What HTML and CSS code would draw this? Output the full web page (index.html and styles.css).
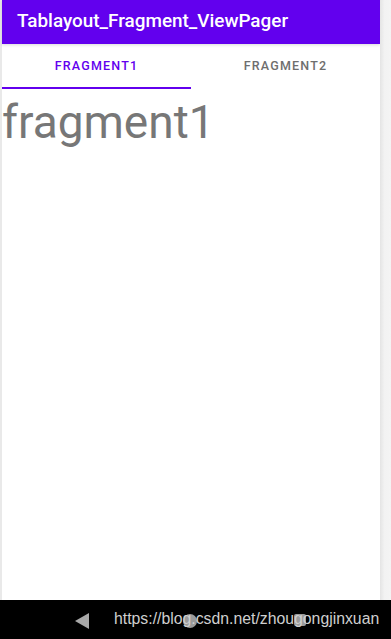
FILE: index.html
```html
<!DOCTYPE html>
<html lang="en">
  <head>
    <meta charset="UTF-8" />
    <title>Tablayout_Fragment_ViewPager</title>
    <link rel="stylesheet" href="styles.css">
  </head>
  <body>
    <div class="screen">
      <div class="app">
        <div class="toolbar">Tablayout_Fragment_ViewPager</div>

        <div class="tabs">
          <div class="tab active">FRAGMENT1</div>
          <div class="tab">FRAGMENT2</div>
        </div>

        <div class="page">
          <p class="big">fragment1</p>
        </div>
      </div>
      <div class="side"></div>
    </div>

    <div class="navbar">
      <svg class="back" width="14" height="16" viewBox="0 0 14 16">
        <polygon points="0,8 14,0 14,16" fill="#a8a8a8" />
      </svg>
      <span class="dot circle"></span>
      <span class="dot square"></span>
      <span class="mark">https://blog.csdn.net/zhougongjinxuan</span>
    </div>
  </body>
</html>
```

FILE: styles.css
```css
body {
  margin: 0;
  padding: 0;
  width: 391px;
  height: 639px;
  overflow: hidden;
  font-family: Roboto, "Noto Sans", sans-serif;
  background-color: #e9e9e9;
  display: flex;
  flex-direction: column;
}

.screen {
  flex: 1;
  display: flex;
  padding-left: 2px;
}

.app {
  width: 378px;
  background-color: #fff;
  display: flex;
  flex-direction: column;
}

.side {
  flex: 1;
  background: linear-gradient(to right, #e4e4e4, #f2f2f2 40%, #f4f4f4);
}

.toolbar {
  height: 44px;
  background-color: #6200ee;
  color: #fff;
  font-size: 18.9px;
  font-weight: 500;
  line-height: 42px;
  padding-left: 15px;
  box-shadow: 0 1px 3px rgba(0, 0, 0, 0.15);
}

.tabs {
  display: flex;
  height: 45px;
}

.tab {
  flex: 1;
  text-align: center;
  font-size: 12.5px;
  font-weight: 500;
  letter-spacing: 1.2px;
  line-height: 44px;
  color: #6e6e6e;
  border-bottom: 2px solid transparent;
}

.tab.active {
  color: #6200ee;
  border-bottom-color: #6200ee;
}

.page {
  flex: 1;
  padding-top: 5px;
}

.big {
  margin: 0;
  font-size: 46px;
  line-height: 56px;
  color: #777;
}

/* Navigation bar */
.navbar {
  height: 39px;
  background-color: #000;
  position: relative;
}

.back {
  position: absolute;
  left: 75px;
  top: 13px;
}

.dot {
  position: absolute;
  background-color: #9a9a9a;
}

.circle {
  left: 183px;
  top: 14px;
  width: 14px;
  height: 14px;
  border-radius: 50%;
}

.square {
  left: 294px;
  top: 14px;
  width: 12px;
  height: 12px;
  border-radius: 2px;
}

.mark {
  position: absolute;
  left: 114px;
  top: 10px;
  font-family: "Liberation Sans", Arial, sans-serif;
  font-size: 15.8px;
  color: #cfcfcf;
  white-space: nowrap;
}
```
